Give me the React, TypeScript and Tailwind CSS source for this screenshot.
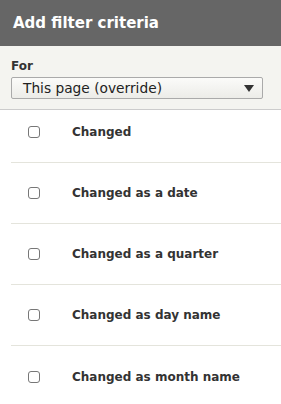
import React from 'react';

const items = [
  'Changed',
  'Changed as a date',
  'Changed as a quarter',
  'Changed as day name',
  'Changed as month name',
];

export default function App() {
  return (
    <div className="w-[281px] h-[404px] overflow-hidden bg-white text-[#333] font-['DejaVu_Sans',Verdana,sans-serif]">
      <div className="h-[46px] bg-[#666] flex items-center px-[13px]">
        <h1 className="text-[15px] font-bold text-white">Add filter criteria</h1>
      </div>
      <div className="h-[64px] bg-[#f4f4f0] border-b border-[#ccc] px-[11px] pt-[12px]">
        <label className="block text-[12px] font-bold leading-[16px] mb-[3px]">For</label>
        <div className="w-[252px] h-[22px] border border-[#aaa] rounded-[2px] bg-gradient-to-b from-[#fbfbf9] to-[#ecece8] flex items-center justify-between pl-[11px] pr-[8px]">
          <span className="text-[13.75px] text-[#222]">This page (override)</span>
          <svg width="10" height="7" viewBox="0 0 10 7">
            <path d="M0 0 H10 L5 7 Z" fill="#333" />
          </svg>
        </div>
      </div>
      <ul>
        {items.map((label, i) => (
          <li
            key={label}
            className={`ml-[11px] flex items-center ${i === 0 ? 'h-[53px] pb-[8px]' : 'h-[61px]'} ${i < items.length - 1 ? 'border-b border-[#e4e4dc]' : ''}`}
          >
            <span className="ml-[17px] w-[12px] h-[12px] border border-[#777] rounded-[3px] bg-white" />
            <span className="ml-[32px] text-[12px] font-bold">{label}</span>
          </li>
        ))}
      </ul>
    </div>
  );
}
